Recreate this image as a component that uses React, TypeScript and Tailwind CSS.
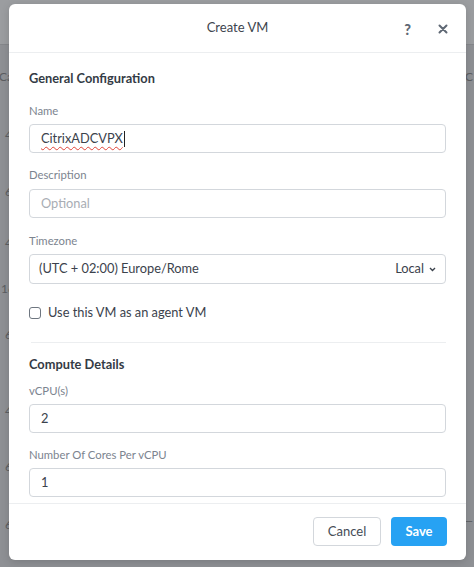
import React from "react";

const font = { fontFamily: "Lato, 'Noto Sans', 'Liberation Sans', sans-serif" };

function Label({ children, className = "" }: { children: React.ReactNode; className?: string }) {
  return (
    <div className={`h-[16px] text-[11.3px] leading-[16px] text-[#7c848f] ${className}`}>{children}</div>
  );
}

function Box({ children, className = "" }: { children?: React.ReactNode; className?: string }) {
  return (
    <div
      className={`flex h-[29px] items-center rounded-[4px] border border-[#d3d7dc] bg-white px-[11px] text-[12.8px] text-[#3b424c] ${className}`}
    >
      {children}
    </div>
  );
}

export default function App() {
  return (
    <div style={font} className="relative h-[567px] w-[474px] overflow-hidden bg-[#8e9094]">
      {/* page behind the dimmed overlay */}
      <div className="h-[45px] border-b border-[#85878b] bg-[#9b9da0]" />
      <div className="flex justify-between text-[12px] text-[#5c5e62]">
        <div className="flex flex-col">
          <span className="mt-[23px] -ml-[1px]">Ca</span>
          <span className="mt-[40px] ml-[5px]">4</span>
          <span className="mt-[39px] ml-[5px]">6</span>
          <span className="mt-[33px] ml-[5px]">4</span>
          <span className="mt-[28px] ml-[1px]">16</span>
          <span className="mt-[28px] ml-[5px]">6</span>
          <span className="mt-[58px] ml-[5px]">4</span>
          <span className="mt-[38px] ml-[5px]">6</span>
          <span className="mt-[40px] ml-[5px]">6</span>
        </div>
        <div className="flex flex-col items-end pr-[1px]">
          <span className="mt-[23px]">C</span>
          <span className="mt-[426px]">—</span>
        </div>
      </div>

      {/* modal */}
      <div className="absolute left-[9px] top-[4px] flex h-[556px] w-[457px] flex-col rounded-[6px] bg-white shadow-[0_2px_8px_rgba(0,0,0,0.15)]">
        {/* header */}
        <div className="relative flex h-[49px] shrink-0 items-center justify-center border-b border-[#eceef0]">
          <span className="text-[13px] text-[#3d444e]">Create VM</span>
          <span className="absolute right-[55px] top-[15px] text-[14.5px] font-black text-[#5f6874]">?</span>
          <svg className="absolute right-[18px] top-[20px]" width="10" height="10" viewBox="0 0 10 10">
            <path d="M1.5 1.5L8.5 8.5M8.5 1.5L1.5 8.5" stroke="#5f6874" strokeWidth="2" strokeLinecap="round" />
          </svg>
        </div>

        {/* body */}
        <div className="h-[450px] shrink-0 overflow-hidden px-[20px]">
          <div className="mt-[15px] h-[20px] text-[12.8px] font-bold leading-[20px] text-[#343b45]">
            General Configuration
          </div>

          <Label className="mt-[15px]">Name</Label>
          <Box className="mt-[5px]">
            <span className="underline decoration-[#e0453a] decoration-wavy decoration-1 underline-offset-[3px]">
              CitrixADCVPX
            </span>
            <span className="ml-[1px] h-[16px] w-[1px] bg-[#222]" />
          </Box>

          <Label className="mt-[14px]">Description</Label>
          <Box className="mt-[6px]">
            <span className="text-[#a8adb4]">Optional</span>
          </Box>

          <Label className="mt-[15px]">Timezone</Label>
          <Box className="mt-[5px] h-[30px] justify-between pl-[9px] pr-[9px]">
            <span>(UTC + 02:00) Europe/Rome</span>
            <span className="flex items-center gap-[5px]">
              Local
              <svg width="7" height="5" viewBox="0 0 7 5">
                <path d="M1 1L3.5 3.5L6 1" stroke="#3b424c" strokeWidth="1.4" fill="none" />
              </svg>
            </span>
          </Box>

          <label className="mt-[19px] flex h-[20px] items-center gap-[7px] text-[12.8px] text-[#3b424c]">
            <span className="h-[12px] w-[12px] rounded-[3px] border border-[#6e7680]" />
            Use this VM as an agent VM
          </label>

          <div className="ml-[2px] mt-[19px] border-t border-[#eceef0]" />

          <div className="mt-[11px] h-[20px] text-[12.8px] font-bold leading-[20px] text-[#343b45]">
            Compute Details
          </div>

          <Label className="mt-[9px]">vCPU(s)</Label>
          <Box className="mt-[5px]">2</Box>

          <Label className="mt-[14px]">Number Of Cores Per vCPU</Label>
          <Box className="mt-[5px]">1</Box>
        </div>

        {/* footer */}
        <div className="flex flex-1 items-start justify-end gap-[10px] border-t border-[#eceef0] px-[19px] pt-[13px]">
          <button className="h-[29px] w-[68px] rounded-[4px] border border-[#d3d7dc] bg-white text-[13px] text-[#454c56]">
            Cancel
          </button>
          <button className="h-[29px] w-[56px] rounded-[4px] bg-[#27a2f3] text-[13px] font-bold text-white">
            Save
          </button>
        </div>
      </div>
    </div>
  );
}
